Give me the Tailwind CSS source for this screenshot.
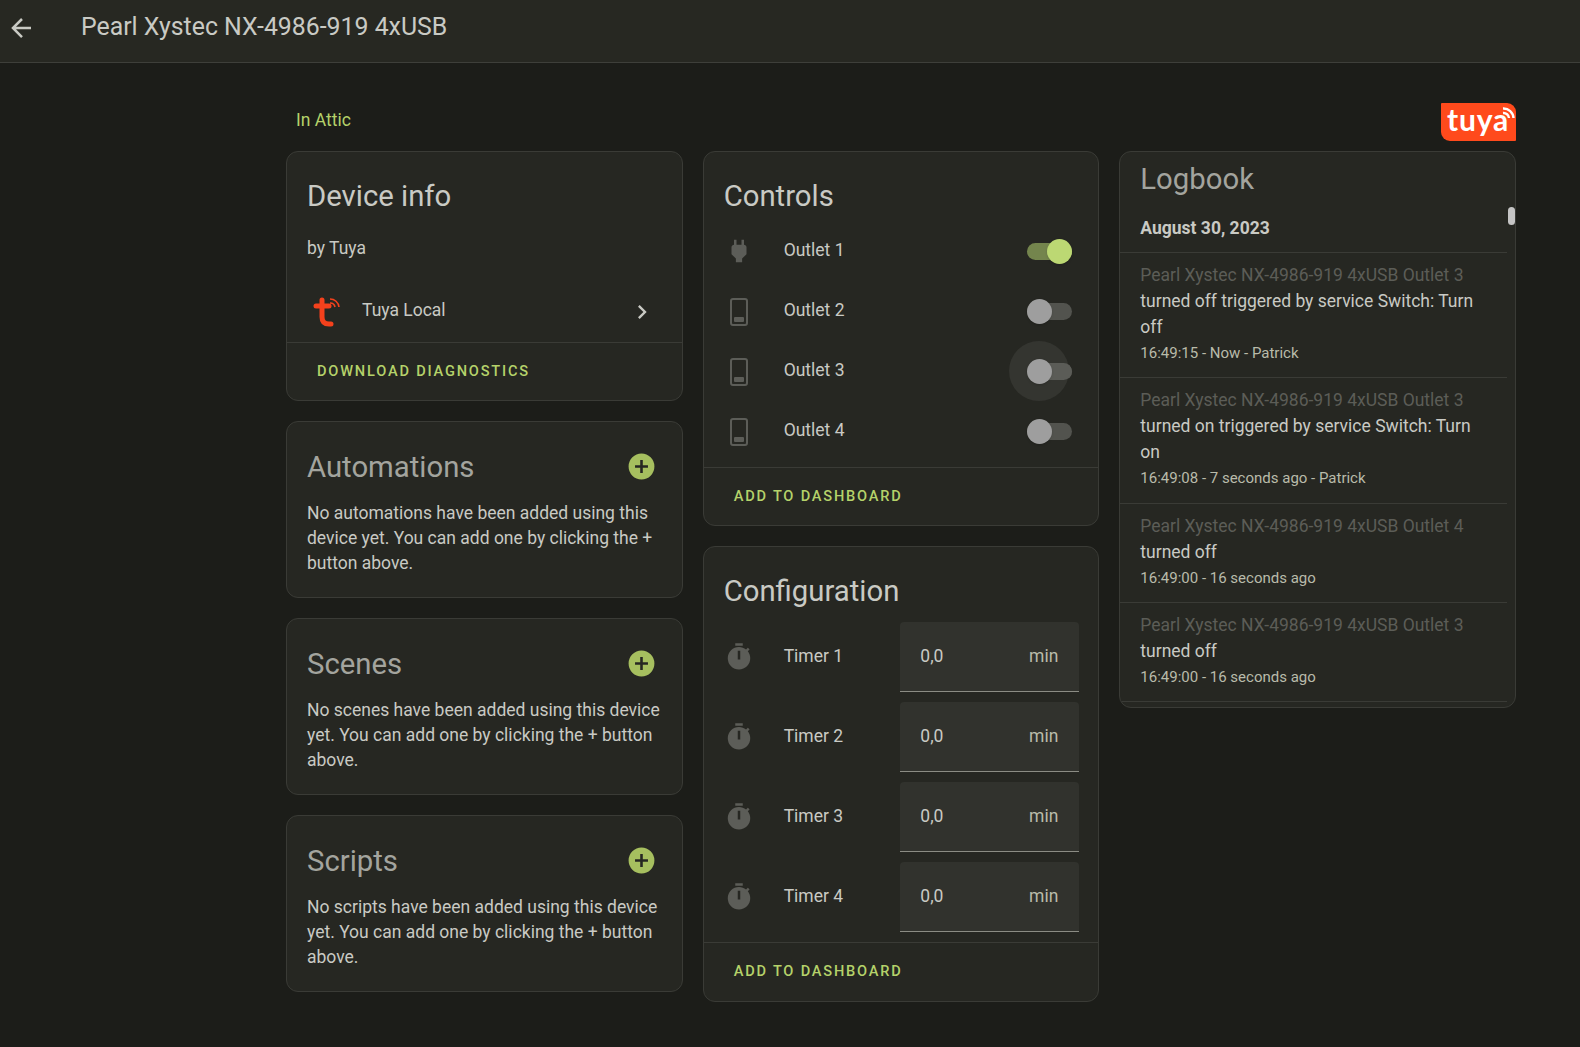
<!DOCTYPE html>
<html lang="en">
<head>
    <meta charset="UTF-8">
    <meta name="viewport" content="width=device-width, initial-scale=1.0">
    <title>Pearl Xystec NX-4986-919 4xUSB</title>
    <script src="https://cdn.jsdelivr.net/npm/@tailwindcss/browser@4"></script>
</head>
<body class="bg-[#1c1d19] font-['Roboto',sans-serif] text-[#c9cac4] h-[1047px] overflow-hidden">
    <header class="h-[63px] bg-[#272822] border-b border-[#3e3f3a] flex items-center">
        <svg class="w-[30px] h-[30px] ml-[6px] -mt-[7px] fill-[#c9cac4]" viewBox="0 0 24 24"><path d="M20,11V13H8L13.5,18.5L12.08,19.92L4.16,12L12.08,4.08L13.5,5.5L8,11H20Z"/></svg>
        <h1 class="ml-[45px] text-[24.85px] leading-[30px] -mt-[8px]">Pearl Xystec NX-4986-919 4xUSB</h1>
    </header>

    <div class="ml-[286px] w-[1230px]">
        <div class="h-[88px] pt-[40px] flex justify-between items-start">
            <a class="pl-[10px] pt-[5px] text-[#b5d26a] text-[17.5px] leading-[24px]">In Attic</a>
            <div class="relative w-[75px] h-[38px] bg-[#ff4a1c] rounded-tr-[9px] rounded-bl-[9px] rounded-tl-[1px] rounded-br-[1px] text-white font-['Lato',sans-serif] font-bold text-[30px] leading-[33px] pl-[6px] tracking-[0.8px]">tuya
                <svg class="absolute right-0 top-[2px] w-[20px] h-[20px] fill-none stroke-white stroke-[2.4]" viewBox="0 0 20 20"><path d="M7 3.5A10 10 0 0 1 17.5 13"/><path d="M7 8A5.5 5.5 0 0 1 13 13"/></svg>
            </div>
        </div>

        <div class="grid grid-cols-3 gap-5 items-start">
            <!-- left column -->
            <div class="flex flex-col gap-5">
                <section class="bg-[#262722] border border-[#3a3b36] rounded-xl">
                    <h2 class="px-5 pt-6 text-[29.3px] leading-[40px]">Device info</h2>
                    <p class="px-5 mt-5 text-[17.5px] leading-[25px]">by Tuya</p>
                    <div class="mt-5 h-[61px] flex items-center pl-[20px] pr-[26px]">
                        <svg class="w-[36px] h-[36px] fill-none" viewBox="0 0 36 36">
                            <path d="M15 6V23Q15 30 22 30H24" stroke="#f4411c" stroke-width="5" stroke-linecap="round"/>
                            <path d="M9 12H22" stroke="#f4411c" stroke-width="5" stroke-linecap="round"/>
                            <path d="M23 5A9 9 0 0 1 32 13M23 9A5 5 0 0 1 28 13" stroke="#f4411c" stroke-width="1.6"/>
                        </svg>
                        <span class="ml-[19px] -mt-[2px] text-[17.5px]">Tuya Local</span>
                        <svg class="w-[28px] h-[28px] ml-auto mt-[1px] fill-[#c9cac4]" viewBox="0 0 24 24"><path d="M8.59,16.58L13.17,12L8.59,7.41L10,6L16,12L10,18L8.59,16.58Z"/></svg>
                    </div>
                    <div class="h-[58px] border-t border-[#3a3b36] pl-[30px] flex items-center text-[14.6px] font-medium tracking-[1.8px] text-[#b5d26a]">DOWNLOAD DIAGNOSTICS</div>
                </section>

                <section class="bg-[#262722] border border-[#3a3b36] rounded-xl px-5 pt-[25px] pb-[21px]">
                    <div class="flex justify-between items-center">
                        <h2 class="text-[29.3px] leading-[40px] text-[#a3a49e]">Automations</h2>
                        <svg class="w-[31px] h-[31px] mr-[5px] -mt-[1px] fill-[#a6bf5f]" viewBox="0 0 24 24"><path d="M17,13H13V17H11V13H7V11H11V7H13V11H17M12,2A10,10 0 0,0 2,12A10,10 0 0,0 12,22A10,10 0 0,0 22,12A10,10 0 0,0 12,2Z"/></svg>
                    </div>
                    <p class="mt-[14px] text-[17.5px] leading-[25px]">No automations have been added using this device yet. You can add one by clicking the + button above.</p>
                </section>

                <section class="bg-[#262722] border border-[#3a3b36] rounded-xl px-5 pt-[25px] pb-[21px]">
                    <div class="flex justify-between items-center">
                        <h2 class="text-[29.3px] leading-[40px] text-[#a3a49e]">Scenes</h2>
                        <svg class="w-[31px] h-[31px] mr-[5px] -mt-[1px] fill-[#a6bf5f]" viewBox="0 0 24 24"><path d="M17,13H13V17H11V13H7V11H11V7H13V11H17M12,2A10,10 0 0,0 2,12A10,10 0 0,0 12,22A10,10 0 0,0 22,12A10,10 0 0,0 12,2Z"/></svg>
                    </div>
                    <p class="mt-[14px] text-[17.5px] leading-[25px]">No scenes have been added using this device yet. You can add one by clicking the + button above.</p>
                </section>

                <section class="bg-[#262722] border border-[#3a3b36] rounded-xl px-5 pt-[25px] pb-[21px]">
                    <div class="flex justify-between items-center">
                        <h2 class="text-[29.3px] leading-[40px] text-[#a3a49e]">Scripts</h2>
                        <svg class="w-[31px] h-[31px] mr-[5px] -mt-[1px] fill-[#a6bf5f]" viewBox="0 0 24 24"><path d="M17,13H13V17H11V13H7V11H11V7H13V11H17M12,2A10,10 0 0,0 2,12A10,10 0 0,0 12,22A10,10 0 0,0 22,12A10,10 0 0,0 12,2Z"/></svg>
                    </div>
                    <p class="mt-[14px] text-[17.5px] leading-[25px]">No scripts have been added using this device yet. You can add one by clicking the + button above.</p>
                </section>
            </div>

            <!-- middle column -->
            <div class="flex flex-col gap-5">
                <section class="bg-[#262722] border border-[#3a3b36] rounded-xl">
                    <h2 class="px-5 pt-6 text-[29.3px] leading-[40px]">Controls</h2>
                    <div class="mt-[5px] pb-[6px]">
                        <div class="h-[60px] flex items-center pl-5 pr-[26px]">
                            <svg class="w-[30px] h-[30px] fill-[#5c5d58]" viewBox="0 0 24 24"><path d="M16,7V3H14V7H10V3H8V7H8C7,7 6,8 6,9V14.5L9.5,18V21H14.5V18L18,14.5V9C18,8 17,7 16,7Z"/></svg>
                            <span class="ml-[30px] -mt-[2px] text-[17.5px]">Outlet 1</span>
                            <div class="relative ml-auto w-[45px] h-[17px] rounded-full bg-[#74854d]">
                                <div class="absolute right-0 -top-1 w-[25px] h-[25px] rounded-full bg-[#bcd873] shadow"></div>
                            </div>
                        </div>
                        <div class="h-[60px] flex items-center pl-5 pr-[26px]">
                            <svg class="w-[30px] h-[30px] mt-[2px] fill-none" viewBox="0 0 30 30"><rect x="7" y="2" width="16" height="26" rx="2" stroke="#5c5d58" stroke-width="2"/><rect x="10" y="20" width="10" height="5" rx="1" fill="#5c5d58"/></svg>
                            <span class="ml-[30px] -mt-[2px] text-[17.5px]">Outlet 2</span>
                            <div class="relative ml-auto w-[45px] h-[17px] rounded-full bg-[#52534e]">
                                <div class="absolute left-0 -top-1 w-[25px] h-[25px] rounded-full bg-[#9e9e9e] shadow"></div>
                            </div>
                        </div>
                        <div class="h-[60px] flex items-center pl-5 pr-[26px]">
                            <svg class="w-[30px] h-[30px] mt-[2px] fill-none" viewBox="0 0 30 30"><rect x="7" y="2" width="16" height="26" rx="2" stroke="#5c5d58" stroke-width="2"/><rect x="10" y="20" width="10" height="5" rx="1" fill="#5c5d58"/></svg>
                            <span class="ml-[30px] -mt-[2px] text-[17.5px]">Outlet 3</span>
                            <div class="relative ml-auto w-[45px] h-[17px] rounded-full bg-[#5b5c57]">
                                <div class="absolute -left-[18px] -top-[22px] w-[60px] h-[60px] rounded-full bg-[#343530]"></div>
                                <div class="absolute left-[12px] top-0 w-[33px] h-[17px] rounded-r-full bg-[#5b5c57]"></div>
                                <div class="absolute left-0 -top-1 w-[25px] h-[25px] rounded-full bg-[#9e9e9e] shadow"></div>
                            </div>
                        </div>
                        <div class="h-[60px] flex items-center pl-5 pr-[26px]">
                            <svg class="w-[30px] h-[30px] mt-[2px] fill-none" viewBox="0 0 30 30"><rect x="7" y="2" width="16" height="26" rx="2" stroke="#5c5d58" stroke-width="2"/><rect x="10" y="20" width="10" height="5" rx="1" fill="#5c5d58"/></svg>
                            <span class="ml-[30px] -mt-[2px] text-[17.5px]">Outlet 4</span>
                            <div class="relative ml-auto w-[45px] h-[17px] rounded-full bg-[#52534e]">
                                <div class="absolute left-0 -top-1 w-[25px] h-[25px] rounded-full bg-[#9e9e9e] shadow"></div>
                            </div>
                        </div>
                    </div>
                    <div class="h-[58px] border-t border-[#3a3b36] pl-[30px] flex items-center text-[14.6px] font-medium tracking-[1.8px] text-[#b5d26a]">ADD TO DASHBOARD</div>
                </section>

                <section class="bg-[#262722] border border-[#3a3b36] rounded-xl">
                    <h2 class="px-5 pt-6 text-[29.3px] leading-[40px]">Configuration</h2>
                    <div class="mt-[11px] pb-[10px] flex flex-col gap-[10px]">
                        <div class="h-[70px] flex items-center pl-5 pr-[19px]">
                            <svg class="w-[30px] h-[30px] fill-[#5c5d58]" viewBox="0 0 24 24"><path d="M19.03,7.39L20.45,5.97C20,5.46 19.55,5 19.04,4.56L17.62,6C16.07,4.74 14.12,4 12,4A9,9 0 0,0 3,13A9,9 0 0,0 12,22C17,22 21,17.97 21,13C21,10.88 20.26,8.93 19.03,7.39M13,14H11V7H13V14M15,1H9V3H15V1Z"/></svg>
                            <span class="ml-[30px] -mt-[2px] text-[17.5px]">Timer 1</span>
                            <div class="ml-auto w-[179px] h-[70px] bg-[#31322d] rounded-t border-b border-[#8b8c84] flex items-center justify-between pl-5 pr-[21px] text-[17.5px]"><span>0,0</span><span class="text-[#b9bbaa]">min</span></div>
                        </div>
                        <div class="h-[70px] flex items-center pl-5 pr-[19px]">
                            <svg class="w-[30px] h-[30px] fill-[#5c5d58]" viewBox="0 0 24 24"><path d="M19.03,7.39L20.45,5.97C20,5.46 19.55,5 19.04,4.56L17.62,6C16.07,4.74 14.12,4 12,4A9,9 0 0,0 3,13A9,9 0 0,0 12,22C17,22 21,17.97 21,13C21,10.88 20.26,8.93 19.03,7.39M13,14H11V7H13V14M15,1H9V3H15V1Z"/></svg>
                            <span class="ml-[30px] -mt-[2px] text-[17.5px]">Timer 2</span>
                            <div class="ml-auto w-[179px] h-[70px] bg-[#31322d] rounded-t border-b border-[#8b8c84] flex items-center justify-between pl-5 pr-[21px] text-[17.5px]"><span>0,0</span><span class="text-[#b9bbaa]">min</span></div>
                        </div>
                        <div class="h-[70px] flex items-center pl-5 pr-[19px]">
                            <svg class="w-[30px] h-[30px] fill-[#5c5d58]" viewBox="0 0 24 24"><path d="M19.03,7.39L20.45,5.97C20,5.46 19.55,5 19.04,4.56L17.62,6C16.07,4.74 14.12,4 12,4A9,9 0 0,0 3,13A9,9 0 0,0 12,22C17,22 21,17.97 21,13C21,10.88 20.26,8.93 19.03,7.39M13,14H11V7H13V14M15,1H9V3H15V1Z"/></svg>
                            <span class="ml-[30px] -mt-[2px] text-[17.5px]">Timer 3</span>
                            <div class="ml-auto w-[179px] h-[70px] bg-[#31322d] rounded-t border-b border-[#8b8c84] flex items-center justify-between pl-5 pr-[21px] text-[17.5px]"><span>0,0</span><span class="text-[#b9bbaa]">min</span></div>
                        </div>
                        <div class="h-[70px] flex items-center pl-5 pr-[19px]">
                            <svg class="w-[30px] h-[30px] fill-[#5c5d58]" viewBox="0 0 24 24"><path d="M19.03,7.39L20.45,5.97C20,5.46 19.55,5 19.04,4.56L17.62,6C16.07,4.74 14.12,4 12,4A9,9 0 0,0 3,13A9,9 0 0,0 12,22C17,22 21,17.97 21,13C21,10.88 20.26,8.93 19.03,7.39M13,14H11V7H13V14M15,1H9V3H15V1Z"/></svg>
                            <span class="ml-[30px] -mt-[2px] text-[17.5px]">Timer 4</span>
                            <div class="ml-auto w-[179px] h-[70px] bg-[#31322d] rounded-t border-b border-[#8b8c84] flex items-center justify-between pl-5 pr-[21px] text-[17.5px]"><span>0,0</span><span class="text-[#b9bbaa]">min</span></div>
                        </div>
                    </div>
                    <div class="h-[59px] border-t border-[#3a3b36] pl-[30px] pb-[1px] flex items-center text-[14.6px] font-medium tracking-[1.8px] text-[#b5d26a]">ADD TO DASHBOARD</div>
                </section>
            </div>

            <!-- logbook -->
            <section class="relative bg-[#262722] border border-[#3a3b36] rounded-xl h-[557px] overflow-hidden pr-[8px]">
                <h2 class="px-5 pt-[7px] text-[29.3px] leading-[40px] text-[#a3a49e]">Logbook</h2>
                <div class="absolute right-0 top-[55px] w-[7px] h-[18px] rounded-full bg-[#c4c4c4]"></div>
                <div class="mt-[17px] px-5 pb-[11px] text-[17.5px] leading-[25px] font-bold border-b border-[#3a3b36]">August 30, 2023</div>
                <div class="pl-5 pr-5 pt-[9px] pb-[11px] border-b border-[#3a3b36] text-[17.5px] leading-[26px]">
                    <div class="text-[#5c5d57]">Pearl Xystec NX-4986-919 4xUSB Outlet 3</div>
                    <div>turned off triggered by service Switch: Turn off</div>
                    <div class="mt-[1px] text-[15px] leading-[25px] text-[#b9bbaa]">16:49:15 - Now - Patrick</div>
                </div>
                <div class="pl-5 pr-5 pt-[9px] pb-[12px] border-b border-[#3a3b36] text-[17.5px] leading-[26px]">
                    <div class="text-[#5c5d57]">Pearl Xystec NX-4986-919 4xUSB Outlet 3</div>
                    <div>turned on triggered by service Switch: Turn on</div>
                    <div class="mt-[1px] text-[15px] leading-[25px] text-[#b9bbaa]">16:49:08 - 7 seconds ago - Patrick</div>
                </div>
                <div class="pl-5 pr-5 pt-[9px] pb-[11px] border-b border-[#3a3b36] text-[17.5px] leading-[26px]">
                    <div class="text-[#5c5d57]">Pearl Xystec NX-4986-919 4xUSB Outlet 4</div>
                    <div>turned off</div>
                    <div class="mt-[1px] text-[15px] leading-[25px] text-[#b9bbaa]">16:49:00 - 16 seconds ago</div>
                </div>
                <div class="pl-5 pr-5 pt-[9px] pb-[11px] border-b border-[#3a3b36] text-[17.5px] leading-[26px]">
                    <div class="text-[#5c5d57]">Pearl Xystec NX-4986-919 4xUSB Outlet 3</div>
                    <div>turned off</div>
                    <div class="mt-[1px] text-[15px] leading-[25px] text-[#b9bbaa]">16:49:00 - 16 seconds ago</div>
                </div>
            </section>
        </div>
    </div>
</body>
</html>
